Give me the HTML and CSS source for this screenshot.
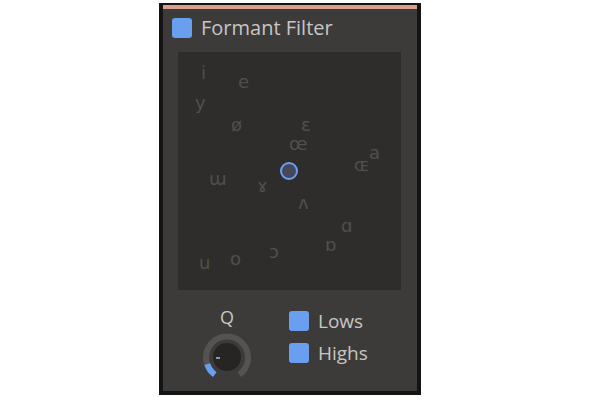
FILE: index.html
```html
<!DOCTYPE html>
<html>
<head>
<meta charset="utf-8">
<link rel="stylesheet" href="styles.css">
</head>
<body>
<div class="page">
  <div class="panel">
    <div class="strip"></div>
    <div class="title-row">
      <span class="check"></span>
      <span class="title">Formant Filter</span>
    </div>
    <div class="pad">
      <span class="v" style="left:23px;top:12px">i</span>
      <span class="v" style="left:60px;top:21px">e</span>
      <span class="v" style="left:17px;top:42px">y</span>
      <span class="v" style="left:53px;top:64px">ø</span>
      <span class="v" style="left:123px;top:64px">ɛ</span>
      <span class="v" style="left:111px;top:83px">œ</span>
      <span class="v" style="left:191px;top:92px">a</span>
      <span class="v" style="left:176px;top:104px">ɶ</span>
      <span class="v" style="left:31px;top:118px">ɯ</span>
      <span class="v" style="left:79px;top:125px">ɤ</span>
      <span class="v" style="left:120px;top:142px">ʌ</span>
      <span class="v" style="left:163px;top:165px">ɑ</span>
      <span class="v" style="left:147px;top:184px">ɒ</span>
      <span class="v" style="left:91px;top:191px">ɔ</span>
      <span class="v" style="left:52px;top:198px">o</span>
      <span class="v" style="left:21px;top:202px">u</span>
      <span class="handle" style="left:102px;top:110px"></span>
    </div>
    <div class="bottom">
      <div class="knob-col">
        <div class="q">Q</div>
        <svg class="knob" width="48" height="48" viewBox="0 0 48 48">
          <path d="M 11.7 41.6 A 21 21 0 1 1 36.3 41.6" fill="none" stroke="#555351" stroke-width="6"/>
          <path d="M 11.7 41.6 A 21 21 0 0 1 4.3 31.2" fill="none" stroke="#6a9ff0" stroke-width="6"/>
          <circle cx="24" cy="24" r="14" fill="#272523"/>
          <line x1="13" y1="25" x2="17" y2="25" stroke="#bdbdbd" stroke-width="1.5"/>
        </svg>
      </div>
      <div class="toggles">
        <div class="toggle"><span class="check small"></span><span class="label">Lows</span></div>
        <div class="toggle"><span class="check small"></span><span class="label">Highs</span></div>
      </div>
    </div>
  </div>
</div>
</body>
</html>
```
FILE: styles.css
```css
html, body {
  margin: 0;
  padding: 0;
  background: #ffffff;
}
.page {
  width: 600px;
  height: 400px;
  padding-top: 3px;
  padding-left: 159px;
  box-sizing: border-box;
}
.panel {
  width: 262px;
  height: 392px;
  box-sizing: border-box;
  border: 4px solid #141414;
  border-top-width: 2px;
  background: #3d3b39;
  display: flex;
  flex-direction: column;
  font-family: "Open Sans", sans-serif;
}
.strip {
  height: 4px;
  background: #d99e8c;
}
.title-row {
  display: flex;
  align-items: center;
  padding: 9px 0 0 9px;
  height: 20px;
}
.check {
  width: 20px;
  height: 20px;
  border-radius: 3px;
  background: #6a9ff0;
  flex: none;
}
.title {
  margin-left: 9px;
  color: #c6c6c6;
  font-size: 20px;
  line-height: 20px;
}
.pad {
  position: relative;
  margin: 14px 0 0 15px;
  width: 223px;
  height: 238px;
  background: #2f2d2b;
}
.v {
  position: absolute;
  color: #514f4d;
  font-family: "DejaVu Sans", sans-serif;
  font-size: 18px;
  line-height: 18px;
}
.handle {
  position: absolute;
  width: 14px;
  height: 14px;
  border: 2px solid #6a9ff0;
  border-radius: 50%;
  background: #44485a;
}
.bottom {
  display: flex;
  padding: 17px 0 0 40px;
}
.knob-col {
  width: 48px;
  display: flex;
  flex-direction: column;
  align-items: center;
}
.q {
  color: #c6c6c6;
  font-size: 18px;
  line-height: 20px;
  margin-bottom: 6px;
}
.toggles {
  margin-left: 38px;
  padding-top: 4px;
  display: flex;
  flex-direction: column;
  gap: 12px;
}
.toggle {
  display: flex;
  align-items: center;
}
.label {
  margin-left: 9px;
  color: #c6c6c6;
  font-size: 19px;
  line-height: 20px;
}
```
